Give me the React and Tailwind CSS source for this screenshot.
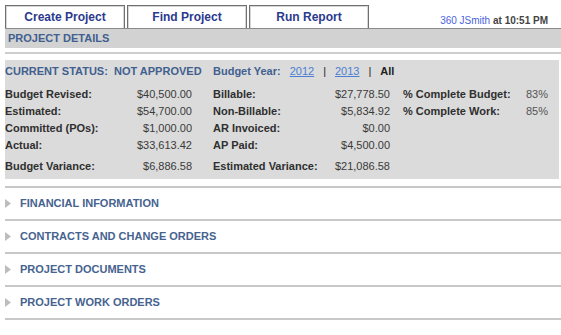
const TABS = ['Create Project', 'Find Project', 'Run Report']

const ROWS = [
  ['Budget Revised:', '$40,500.00', 'Billable:', '$27,778.50', '% Complete Budget:', '83%'],
  ['Estimated:', '$54,700.00', 'Non-Billable:', '$5,834.92', '% Complete Work:', '85%'],
  ['Committed (POs):', '$1,000.00', 'AR Invoiced:', '$0.00', '', ''],
  ['Actual:', '$33,613.42', 'AP Paid:', '$4,500.00', '', ''],
]

const SECTIONS = [
  'FINANCIAL INFORMATION',
  'CONTRACTS AND CHANGE ORDERS',
  'PROJECT DOCUMENTS',
  'PROJECT WORK ORDERS',
]

function Triangle() {
  return (
    <svg width="6" height="9" viewBox="0 0 6 9" className="shrink-0">
      <path d="M0 0 L6 4.5 L0 9 Z" fill="#bdbdbd" />
    </svg>
  )
}

export default function App() {
  return (
    <div className="w-[561px] h-[335px] bg-white font-['Liberation_Sans',Arial,sans-serif] text-[11px] overflow-hidden">
      {/* Tabs */}
      <div className="flex items-end h-[28px] pt-[5px] pl-[5px]">
        <div className="flex gap-[2px] h-full">
          {TABS.map(t => (
            <div
              key={t}
              className="w-[120px] h-full flex items-center justify-center border border-b-0 border-[#707070] shadow-[inset_1px_1px_0_#d6d6d6,inset_-1px_0_0_#d6d6d6] text-[12px] font-bold text-[#2b3a8c]"
            >
              {t}
            </div>
          ))}
        </div>
        <div className="ml-auto pr-[13px] pb-[1px] text-[10px] leading-[12px]">
          <span className="text-[#4a64de]">360 JSmith</span>{' '}
          <span className="text-[#444] font-bold">at 10:51 PM</span>
        </div>
      </div>

      {/* Header bar */}
      <div className="ml-[5px] h-[20px] bg-[#d2d2d2] border-t border-[#8a8a8a] flex items-center pl-[3px]">
        <span className="font-bold text-[#41608f]">PROJECT DETAILS</span>
      </div>

      <div className="ml-[5px] mt-[4px] border-t-2 border-[#cdcdcd]" />

      {/* Status box */}
      <div className="ml-[5px] mr-[2px] mt-[6px] bg-[#dbdbdb] pt-[3px] pb-[4px] leading-[17px]">
        <div className="flex h-[17px] items-center">
          <div className="w-[208px] font-bold text-[#41608f] whitespace-pre">CURRENT STATUS:  NOT APPROVED</div>
          <div className="flex items-center">
            <span className="font-bold text-[#41608f]">Budget Year:</span>
            <a className="ml-[9px] text-[#4a7fd4] underline">2012</a>
            <span className="mx-[9px] text-[#222]">|</span>
            <a className="text-[#4a7fd4] underline">2013</a>
            <span className="mx-[9px] text-[#222]">|</span>
            <span className="font-bold text-[#222]">All</span>
          </div>
        </div>

        <div className="mt-[6px]">
          {ROWS.map(r => (
            <div key={r[0]} className="flex h-[17px] items-center">
              <div className="w-[110px] font-bold text-[#2f2f2f]">{r[0]}</div>
              <div className="w-[77px] text-right text-[#3a3a3a]">{r[1]}</div>
              <div className="ml-[21px] w-[100px] font-bold text-[#2f2f2f]">{r[2]}</div>
              <div className="w-[77px] text-right text-[#3a3a3a]">{r[3]}</div>
              <div className="ml-[13px] w-[115px] font-bold text-[#2f2f2f]">{r[4]}</div>
              <div className="w-[30px] text-right text-[#555]">{r[5]}</div>
            </div>
          ))}
        </div>

        <div className="mt-[4px] flex h-[17px] items-center">
          <div className="w-[110px] font-bold text-[#2f2f2f]">Budget Variance:</div>
          <div className="w-[77px] text-right text-[#3a3a3a]">$6,886.58</div>
          <div className="ml-[21px] w-[177px] flex justify-between">
            <span className="font-bold text-[#2f2f2f]">Estimated Variance:</span>
            <span className="text-[#3a3a3a]">$21,086.58</span>
          </div>
        </div>
      </div>

      {/* Collapsed sections */}
      <div className="ml-[5px] mt-[7px] border-t-2 border-[#c8c8c8]">
        {SECTIONS.map(s => (
          <div key={s} className="h-[33px] border-b-2 border-[#c8c8c8] flex items-center gap-[9px]">
            <Triangle />
            <span className="font-bold text-[#46638f]">{s}</span>
          </div>
        ))}
      </div>
    </div>
  )
}
